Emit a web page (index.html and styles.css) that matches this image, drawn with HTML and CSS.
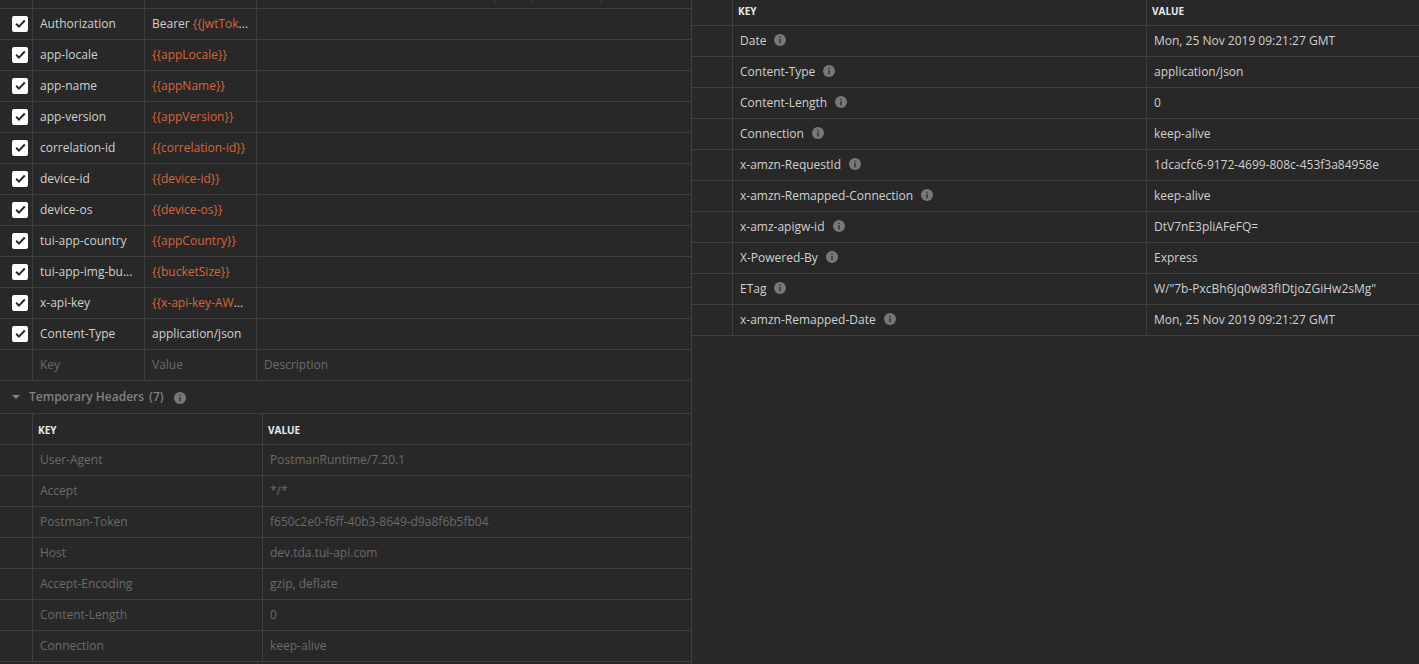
FILE: index.html
```html
<!DOCTYPE html>
<html lang="en">
<head>
  <meta charset="UTF-8" />
  <title>Headers</title>
  <link rel="stylesheet" href="styles.css">
</head>
<body>
  <svg class="defs" width="0" height="0" aria-hidden="true">
    <symbol id="info" viewBox="0 0 12 12">
      <circle cx="6" cy="6" r="6" fill="#787878"/>
      <rect x="5.2" y="2.6" width="1.6" height="1.4" fill="#3a3a3a"/>
      <rect x="5.2" y="5" width="1.6" height="4.4" fill="#3a3a3a"/>
    </symbol>
    <symbol id="check" viewBox="0 0 16 16">
      <rect width="16" height="16" rx="2" fill="#fff"/>
      <path d="M4.2 7.8 6.9 10.6 12.8 4.5" fill="none" stroke="#282828" stroke-width="2"/>
    </symbol>
  </svg>

  <main class="panes">
    <!-- request headers -->
    <section class="pane-left">
      <div class="stub-row">
        <i></i><i></i><i></i>
        <div class="stubs"><i></i><i></i><i></i></div>
      </div>

      <div class="row req"><span class="cell tick"><svg class="box"><use href="#check"/></svg></span><span class="cell">Authorization</span><span class="cell">Bearer&nbsp;<em>{{jwtTok</em>...</span><span class="cell"></span></div>
      <div class="row req"><span class="cell tick"><svg class="box"><use href="#check"/></svg></span><span class="cell">app-locale</span><span class="cell"><em>{{appLocale}}</em></span><span class="cell"></span></div>
      <div class="row req"><span class="cell tick"><svg class="box"><use href="#check"/></svg></span><span class="cell">app-name</span><span class="cell"><em>{{appName}}</em></span><span class="cell"></span></div>
      <div class="row req"><span class="cell tick"><svg class="box"><use href="#check"/></svg></span><span class="cell">app-version</span><span class="cell"><em>{{appVersion}}</em></span><span class="cell"></span></div>
      <div class="row req"><span class="cell tick"><svg class="box"><use href="#check"/></svg></span><span class="cell">correlation-id</span><span class="cell"><em>{{correlation-id}}</em></span><span class="cell"></span></div>
      <div class="row req"><span class="cell tick"><svg class="box"><use href="#check"/></svg></span><span class="cell">device-id</span><span class="cell"><em>{{device-id}}</em></span><span class="cell"></span></div>
      <div class="row req"><span class="cell tick"><svg class="box"><use href="#check"/></svg></span><span class="cell">device-os</span><span class="cell"><em>{{device-os}}</em></span><span class="cell"></span></div>
      <div class="row req"><span class="cell tick"><svg class="box"><use href="#check"/></svg></span><span class="cell">tui-app-country</span><span class="cell"><em>{{appCountry}}</em></span><span class="cell"></span></div>
      <div class="row req"><span class="cell tick"><svg class="box"><use href="#check"/></svg></span><span class="cell">tui-app-img-bu...</span><span class="cell"><em>{{bucketSize}}</em></span><span class="cell"></span></div>
      <div class="row req"><span class="cell tick"><svg class="box"><use href="#check"/></svg></span><span class="cell">x-api-key</span><span class="cell"><em>{{x-api-key-AW</em>...</span><span class="cell"></span></div>
      <div class="row req"><span class="cell tick"><svg class="box"><use href="#check"/></svg></span><span class="cell">Content-Type</span><span class="cell">application/json</span><span class="cell"></span></div>
      <div class="row req blank"><span class="cell tick"></span><span class="cell">Key</span><span class="cell">Value</span><span class="cell">Description</span></div>

      <div class="temp-title">
        <span class="caret"></span>
        <span class="temp-name">Temporary Headers</span>
        <span class="temp-count">(7)</span>
        <svg class="info"><use href="#info"/></svg>
      </div>

      <div class="row temp head"><span class="cell"></span><span class="cell">KEY</span><span class="cell">VALUE</span></div>
      <div class="row temp muted"><span class="cell"></span><span class="cell">User-Agent</span><span class="cell">PostmanRuntime/7.20.1</span></div>
      <div class="row temp muted"><span class="cell"></span><span class="cell">Accept</span><span class="cell">*/*</span></div>
      <div class="row temp muted"><span class="cell"></span><span class="cell">Postman-Token</span><span class="cell">f650c2e0-f6ff-40b3-8649-d9a8f6b5fb04</span></div>
      <div class="row temp muted"><span class="cell"></span><span class="cell">Host</span><span class="cell">dev.tda.tui-api.com</span></div>
      <div class="row temp muted"><span class="cell"></span><span class="cell">Accept-Encoding</span><span class="cell">gzip, deflate</span></div>
      <div class="row temp muted"><span class="cell"></span><span class="cell">Content-Length</span><span class="cell">0</span></div>
      <div class="row temp muted"><span class="cell"></span><span class="cell">Connection</span><span class="cell">keep-alive</span></div>
    </section>

    <!-- response headers -->
    <section class="pane-right">
      <div class="row res head first"><span class="cell"></span><span class="cell">KEY</span><span class="cell">VALUE</span></div>
      <div class="row res"><span class="cell"></span><span class="cell">Date<svg class="info"><use href="#info"/></svg></span><span class="cell">Mon, 25 Nov 2019 09:21:27 GMT</span></div>
      <div class="row res"><span class="cell"></span><span class="cell">Content-Type<svg class="info"><use href="#info"/></svg></span><span class="cell">application/json</span></div>
      <div class="row res"><span class="cell"></span><span class="cell">Content-Length<svg class="info"><use href="#info"/></svg></span><span class="cell">0</span></div>
      <div class="row res"><span class="cell"></span><span class="cell">Connection<svg class="info"><use href="#info"/></svg></span><span class="cell">keep-alive</span></div>
      <div class="row res"><span class="cell"></span><span class="cell">x-amzn-RequestId<svg class="info"><use href="#info"/></svg></span><span class="cell">1dcacfc6-9172-4699-808c-453f3a84958e</span></div>
      <div class="row res"><span class="cell"></span><span class="cell">x-amzn-Remapped-Connection<svg class="info"><use href="#info"/></svg></span><span class="cell">keep-alive</span></div>
      <div class="row res"><span class="cell"></span><span class="cell">x-amz-apigw-id<svg class="info"><use href="#info"/></svg></span><span class="cell">DtV7nE3pliAFeFQ=</span></div>
      <div class="row res"><span class="cell"></span><span class="cell">X-Powered-By<svg class="info"><use href="#info"/></svg></span><span class="cell">Express</span></div>
      <div class="row res"><span class="cell"></span><span class="cell">ETag<svg class="info"><use href="#info"/></svg></span><span class="cell">W/"7b-PxcBh6Jq0w83fIDtjoZGiHw2sMg"</span></div>
      <div class="row res"><span class="cell"></span><span class="cell">x-amzn-Remapped-Date<svg class="info"><use href="#info"/></svg></span><span class="cell">Mon, 25 Nov 2019 09:21:27 GMT</span></div>
    </section>
  </main>
</body>
</html>
```

FILE: styles.css
```css
/* reset */
*,*::before,*::after{box-sizing:border-box;margin:0;padding:0}
:root{
  --bg:#282828;
  --line:#3f3f3f;
  --text:#d0d0d0;
  --muted:#6b6b6b;
  --var:#d8643c;
}
html,body{
  width:100%;height:100%;overflow:hidden;background:var(--bg);
  font-family:"Open Sans","Noto Sans",sans-serif;font-size:12px;color:var(--text);
}
.defs{position:absolute}

.panes{display:flex;height:664px}
.pane-left{width:692px;flex:none;border-right:1px solid var(--line)}
.pane-right{flex:1;min-width:0}

/* clipped header strip on top of the request table */
.stub-row{
  display:grid;grid-template-columns:33px 112px 112px 1fr;
  height:9px;border-bottom:1px solid var(--line);
}
.stub-row>i{border-right:1px solid var(--line)}
.stubs{display:flex;height:4px;padding-left:237px}
.stubs i{height:4px;border-right:1px solid var(--line)}
.stubs i:nth-child(1){width:1px}
.stubs i:nth-child(2){width:37px}
.stubs i:nth-child(3){width:70px}

/* rows */
.row{display:grid;height:31px;border-bottom:1px solid var(--line)}
.cell{
  display:flex;align-items:center;min-width:0;white-space:pre;
  border-right:1px solid var(--line);padding:0 0 2px 7px;
}
.cell:last-child{border-right:none}
.cell em{font-style:normal;color:var(--var)}

.req{grid-template-columns:33px 112px 112px 1fr}
.temp{grid-template-columns:33px 230px 1fr}
.res{grid-template-columns:41px 414px 1fr}

.tick{padding:0 0 0 12px}
.box{width:16px;height:16px}

.blank .cell{color:var(--muted)}
.muted .cell{color:var(--muted)}

.head .cell{font-size:10px;font-weight:700;color:#e8e8e8;padding:1px 0 0 5px}
.res.first{height:26px}
.res.first .cell{padding:0 0 4px 5px}

.info{width:12px;height:12px;margin-left:8px;flex:none}

/* temporary headers title */
.temp-title{
  display:flex;align-items:center;height:33px;
  border-bottom:1px solid var(--line);padding:0 0 0 12px;color:#808080;
}
.caret{
  width:0;height:0;border-left:4px solid transparent;border-right:4px solid transparent;
  border-top:4px solid #808080;margin-right:9px;
}
.temp-name{font-weight:600;margin-bottom:1px}
.temp-count{margin:0 0 1px 5px;font-weight:600}
.temp-title .info{margin:1px 0 0 10px}
```
